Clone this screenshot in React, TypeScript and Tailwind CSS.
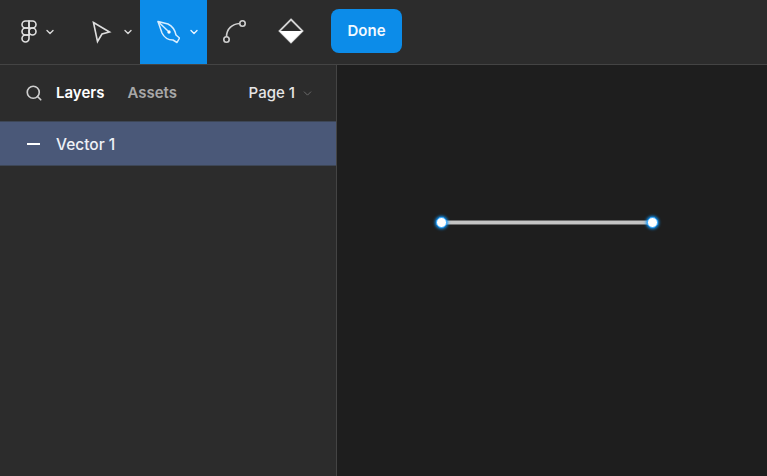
import { ChevronDown, Search } from "lucide-react";

function FigmaIcon() {
  return (
    <svg width="18" height="26" viewBox="0 0 18 26" fill="none" stroke="#e0e0e0" strokeWidth="1.6" className="-mt-[2px]">
      <path d="M9 3H5.5a3.5 3.5 0 0 0 0 7H9V3Z" />
      <path d="M9 3h3.5a3.5 3.5 0 0 1 0 7H9V3Z" />
      <path d="M9 10H5.5a3.5 3.5 0 0 0 0 7H9v-7Z" />
      <circle cx="12.5" cy="13.5" r="3.5" />
      <path d="M5.5 17H9v3.5A3.5 3.5 0 1 1 5.5 17Z" />
    </svg>
  );
}

function MoveIcon() {
  return (
    <svg width="22" height="24" viewBox="0 0 22 24" fill="none" stroke="#dedede" strokeWidth="1.6" strokeLinejoin="miter">
      <path d="M3.5 2.5 L19.5 12 L12 14 L7.5 21.5 Z" />
    </svg>
  );
}

function PenIcon() {
  return (
    <svg width="24" height="24" viewBox="0 0 24 24" fill="none" stroke="#d8eeff" strokeWidth="1.5" strokeLinejoin="round">
      <path d="M2 1.5 L12 4 C16 6 19 10 20 15 L23.5 18 L21 22.5 L17 20 C12 20 8 17 6 13 Z" />
      <path d="M2 1.5 L12 11" />
      <circle cx="13" cy="12" r="1.7" fill="#ffffff" stroke="none" />
    </svg>
  );
}

function BendIcon() {
  return (
    <svg width="26" height="26" viewBox="0 0 26 26" fill="none" stroke="#d0d0d0" strokeWidth="1.6">
      <circle cx="20.5" cy="4.5" r="2.7" />
      <circle cx="4.5" cy="20.5" r="2.7" />
      <path d="M4.5 17.8 C4.5 10 10 5 17.8 4.5" />
    </svg>
  );
}

function FillIcon() {
  return (
    <svg width="26" height="26" viewBox="0 0 26 26" className="-mt-[2px]">
      <path d="M13 1.5 L24.5 13 L13 24.5 L1.5 13 Z" fill="none" stroke="#d4d4d4" strokeWidth="1.8" />
      <path d="M1.5 13 H24.5 L13 24.5 Z" fill="#ffffff" />
    </svg>
  );
}

function Handle() {
  return (
    <div className="h-[11px] w-[11px] rounded-full border-[1.5px] border-[#35a8ff] bg-white shadow-[0_0_3px_1px_#0d99ff]" />
  );
}

export default function App() {
  return (
    <div className="flex h-[476px] w-[767px] flex-col overflow-hidden bg-[#1e1e1e] font-['Inter',sans-serif] text-white">
      <div className="flex h-[65px] shrink-0 items-stretch border-b border-[#444444] bg-[#2c2c2c]">
        <div className="flex w-[75px] items-center pl-[20px]">
          <FigmaIcon />
          <ChevronDown size={12} strokeWidth={2.8} className="ml-[6px] text-[#d8d8d8]" />
        </div>
        <div className="flex w-[65px] items-center pl-[15px]">
          <MoveIcon />
          <ChevronDown size={12} strokeWidth={2.8} className="ml-[10px] text-[#d8d8d8]" />
        </div>
        <div className="flex w-[67px] items-center bg-[#0c8ce9] pl-[16px]">
          <PenIcon />
          <ChevronDown size={12} strokeWidth={2.8} className="ml-[8px] text-[#e8f4ff]" />
        </div>
        <div className="flex w-[57px] items-center pl-[15px]">
          <BendIcon />
        </div>
        <div className="flex w-[67px] items-center pl-[14px]">
          <FillIcon />
        </div>
        <div className="flex items-center pb-[2px]">
          <button className="flex h-[44px] w-[71px] items-center justify-center rounded-[8px] bg-[#0c8ce9] text-[15px] font-semibold text-[#f2f9ff]">
            Done
          </button>
        </div>
      </div>

      <div className="flex min-h-0 flex-1">
        <div className="flex w-[337px] shrink-0 flex-col border-r border-[#444444] bg-[#2c2c2c]">
          <div className="flex h-[56px] shrink-0 items-center pl-[25px] pr-[22px] text-[15px] font-semibold">
            <Search size={18} strokeWidth={2.2} className="text-[#cfcfcf]" />
            <span className="ml-[13px] text-white">Layers</span>
            <span className="ml-[23px] text-[#a8a8a8]">Assets</span>
            <span className="ml-auto font-medium text-[#e6e6e6]">Page 1</span>
            <ChevronDown size={13} strokeWidth={1.5} className="ml-[6px] text-[#777777]" />
          </div>
          <div className="flex h-[45px] shrink-0 items-center border-y border-[#3d4656] bg-[#4a5878] pl-[27px] text-[15.5px] font-medium text-[#eef1f6]">
            <div className="h-[2px] w-[13px] bg-white" />
            <span className="ml-[16px] pt-[2px]">Vector 1</span>
          </div>
        </div>

        <div className="relative flex-1 bg-[#1e1e1e]">
          <div className="absolute left-[104px] top-[155px] h-[5px] w-[211px] border-y border-[#6e6e6e] bg-[#c4c4c4]" />
          <div className="absolute left-[99px] top-[152px]">
            <Handle />
          </div>
          <div className="absolute left-[310px] top-[152px]">
            <Handle />
          </div>
        </div>
      </div>
    </div>
  );
}
